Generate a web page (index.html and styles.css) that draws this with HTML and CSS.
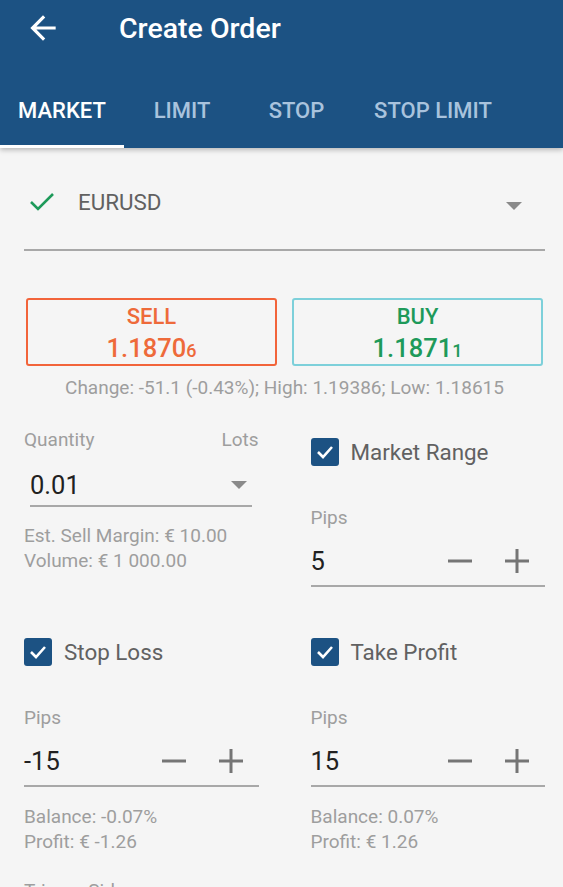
FILE: index.html
```html
<!DOCTYPE html>
<html lang="en">
<head>
    <meta charset="UTF-8">
    <meta name="viewport" content="width=device-width, initial-scale=1.0">
    <title>Create Order</title>
    <link rel="stylesheet" href="styles.css">
</head>
<body>
<header class="appbar">
    <div class="toolbar">
        <svg class="back-icon" viewBox="0 0 24 24" width="38" height="38"><path fill="#fff" d="M20 11H7.83l5.59-5.59L12 4l-8 8 8 8 1.41-1.41L7.83 13H20v-2z"/></svg>
        <h1 class="title">Create Order</h1>
    </div>
    <nav class="tabs">
        <div class="tab tab-market active">MARKET</div>
        <div class="tab tab-limit">LIMIT</div>
        <div class="tab tab-stop">STOP</div>
        <div class="tab tab-stoplimit">STOP LIMIT</div>
    </nav>
</header>

<main class="content">
    <div class="symbol-row">
        <svg class="symbol-check" viewBox="0 0 26 22" width="26" height="22"><polyline points="2,11 9,18 24,3" fill="none" stroke="#1e9a5a" stroke-width="2.6"/></svg>
        <span class="symbol-name">EURUSD</span>
        <svg class="caret caret-symbol" viewBox="0 0 16 8" width="16" height="8"><polygon points="0,0 16,0 8,8" fill="#8a8a8a"/></svg>
    </div>

    <div class="quotes">
        <div class="quote sell">
            <div class="quote-side">SELL</div>
            <div class="quote-price">1.1870<small>6</small></div>
        </div>
        <div class="quote buy">
            <div class="quote-side">BUY</div>
            <div class="quote-price">1.1871<small>1</small></div>
        </div>
    </div>
    <div class="change">Change: -51.1 (-0.43%); High: 1.19386; Low: 1.18615</div>

    <div class="columns columns-top">
        <div class="quantity">
            <div class="quantity-head">
                <span>Quantity</span>
                <span>Lots</span>
            </div>
            <div class="quantity-input">
                <span class="value">0.01</span>
                <svg class="caret" viewBox="0 0 16 8" width="16" height="8"><polygon points="0,0 16,0 8,8" fill="#8a8a8a"/></svg>
            </div>
            <div class="notes notes-quantity">
                <div>Est. Sell Margin: € 10.00</div>
                <div>Volume: € 1 000.00</div>
            </div>
        </div>
        <div class="block block-range">
            <label class="check-row">
                <span class="checkbox"><svg viewBox="0 0 28 28" width="28" height="28"><polyline points="7,14 12,19 21,9" fill="none" stroke="#fff" stroke-width="2.6"/></svg></span>
                Market Range
            </label>
            <div class="field-label">Pips</div>
            <div class="stepper">
                <span class="value">5</span>
                <svg class="step" viewBox="0 0 24 24" width="24" height="24"><line x1="0" y1="12" x2="24" y2="12" stroke="#757575" stroke-width="3"/></svg>
                <svg class="step" viewBox="0 0 24 24" width="24" height="24"><line x1="0" y1="12" x2="24" y2="12" stroke="#757575" stroke-width="3"/><line x1="12" y1="0" x2="12" y2="24" stroke="#757575" stroke-width="3"/></svg>
            </div>
        </div>
    </div>

    <div class="columns columns-bottom">
        <div class="block">
            <label class="check-row">
                <span class="checkbox"><svg viewBox="0 0 28 28" width="28" height="28"><polyline points="7,14 12,19 21,9" fill="none" stroke="#fff" stroke-width="2.6"/></svg></span>
                Stop Loss
            </label>
            <div class="field-label">Pips</div>
            <div class="stepper">
                <span class="value">-15</span>
                <svg class="step" viewBox="0 0 24 24" width="24" height="24"><line x1="0" y1="12" x2="24" y2="12" stroke="#757575" stroke-width="3"/></svg>
                <svg class="step" viewBox="0 0 24 24" width="24" height="24"><line x1="0" y1="12" x2="24" y2="12" stroke="#757575" stroke-width="3"/><line x1="12" y1="0" x2="12" y2="24" stroke="#757575" stroke-width="3"/></svg>
            </div>
            <div class="notes">
                <div>Balance: -0.07%</div>
                <div>Profit: € -1.26</div>
            </div>
        </div>
        <div class="block">
            <label class="check-row">
                <span class="checkbox"><svg viewBox="0 0 28 28" width="28" height="28"><polyline points="7,14 12,19 21,9" fill="none" stroke="#fff" stroke-width="2.6"/></svg></span>
                Take Profit
            </label>
            <div class="field-label">Pips</div>
            <div class="stepper">
                <span class="value">15</span>
                <svg class="step" viewBox="0 0 24 24" width="24" height="24"><line x1="0" y1="12" x2="24" y2="12" stroke="#757575" stroke-width="3"/></svg>
                <svg class="step" viewBox="0 0 24 24" width="24" height="24"><line x1="0" y1="12" x2="24" y2="12" stroke="#757575" stroke-width="3"/><line x1="12" y1="0" x2="12" y2="24" stroke="#757575" stroke-width="3"/></svg>
            </div>
            <div class="notes">
                <div>Balance: 0.07%</div>
                <div>Profit: € 1.26</div>
            </div>
        </div>
    </div>

    <div class="field-label trigger">Trigger Side</div>
</main>
</body>
</html>
```

FILE: styles.css
```css
body {
    margin: 0;
    height: 887px;
    overflow: hidden;
    font-family: Roboto, "Liberation Sans", sans-serif;
    background-color: #F5F5F5;
}
.appbar {
    background-color: #1C5283;
    color: #fff;
    box-shadow: 0 2px 5px rgba(0, 0, 0, 0.25);
    position: relative;
    z-index: 1;
}
.toolbar {
    height: 56px;
    display: flex;
    align-items: center;
}
.back-icon {
    margin-left: 24px;
}
.title {
    margin: 0 0 0 57px;
    font-size: 28.5px;
    font-weight: 500;
}
.tabs {
    display: flex;
    height: 92px;
}
.tab {
    display: flex;
    align-items: center;
    justify-content: center;
    padding-top: 16px;
    box-sizing: border-box;
    font-size: 22px;
    font-weight: 500;
    color: #A9C3DD;
}
.tab.active {
    color: #fff;
    box-shadow: inset 0 -3px 0 #fff;
}
.tab-market { width: 124px; }
.tab-limit { width: 116px; }
.tab-stop { width: 113px; }
.tab-stoplimit { width: 160px; }

.content {
    padding: 0 18px 0 24px;
}
.symbol-row {
    display: flex;
    align-items: center;
    height: 103px;
    padding-top: 6px;
    box-sizing: border-box;
    border-bottom: 2px solid #A8A8A8;
}
.symbol-check {
    margin: 0 0 0 5px;
}
.symbol-name {
    margin-left: 23px;
    font-size: 22.4px;
    color: #616161;
    flex: 1;
}
.caret-symbol {
    margin: 8px 23px 0 0;
}
.quotes {
    display: grid;
    grid-template-columns: 1fr 1fr;
    gap: 15px;
    margin: 47px 2px 0;
}
.quote {
    height: 68px;
    box-sizing: border-box;
    border: 2px solid;
    border-radius: 3px;
    text-align: center;
    padding-top: 2px;
}
.quote.sell {
    border-color: #F2643A;
    color: #EE6A3A;
}
.quote.buy {
    border-color: #7DD0DA;
    color: #1E9A5A;
}
.quote-side {
    font-size: 22px;
    font-weight: 500;
    line-height: 30px;
}
.quote-price {
    font-size: 25.5px;
    font-weight: 500;
    line-height: 32px;
}
.quote-price small {
    font-size: 18px;
}
.change {
    margin-top: 10px;
    text-align: center;
    font-size: 19px;
    line-height: 24px;
    color: #9E9E9E;
}
.columns {
    display: grid;
    grid-template-columns: 1fr 1fr;
    gap: 52px;
}
.columns-top {
    margin-top: 29px;
}
.columns-bottom {
    margin-top: 51px;
}
.quantity-head {
    display: flex;
    justify-content: space-between;
    font-size: 19px;
    line-height: 22px;
    color: #9E9E9E;
}
.quantity-input {
    display: flex;
    align-items: center;
    justify-content: space-between;
    height: 40px;
    margin: 14px 7px 0 6px;
    border-bottom: 2px solid #A8A8A8;
}
.quantity-input .caret {
    margin-right: 5px;
}
.value {
    font-size: 25.5px;
    color: #212121;
}
.notes {
    margin-top: 17px;
    font-size: 19px;
    line-height: 25px;
    color: #9E9E9E;
}
.notes-quantity {
    margin-top: 16px;
}
.block-range {
    padding-top: 9px;
}
.check-row {
    display: flex;
    align-items: center;
    gap: 12px;
    height: 28px;
    font-size: 22.4px;
    color: #616161;
}
.checkbox {
    width: 28px;
    height: 28px;
    border-radius: 3px;
    background-color: #1C5283;
}
.checkbox svg {
    display: block;
}
.field-label {
    margin-top: 41px;
    font-size: 19px;
    line-height: 22px;
    color: #9E9E9E;
}
.stepper {
    display: flex;
    align-items: center;
    height: 48px;
    margin-top: 8px;
    border-bottom: 2px solid #A8A8A8;
}
.stepper .value {
    flex: 1;
}
.stepper .step {
    margin-right: 16px;
}
.stepper .step + .step {
    margin-left: 17px;
}
.trigger {
    margin-top: 26px;
}
```
